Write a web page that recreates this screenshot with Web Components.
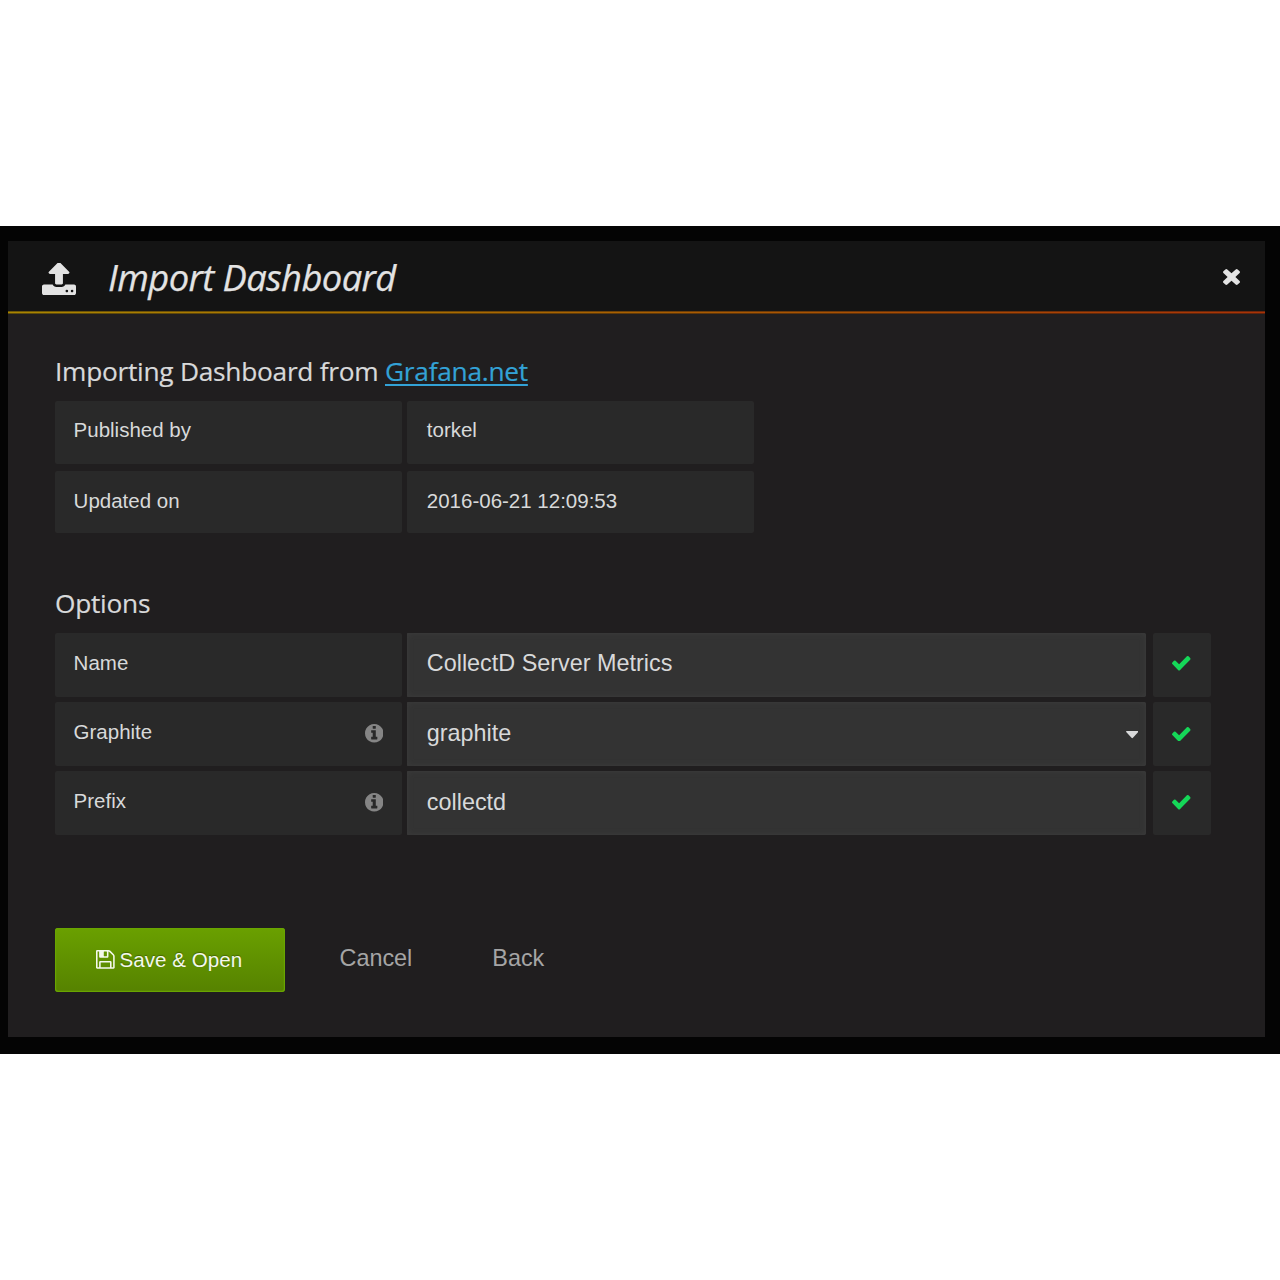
<!DOCTYPE html>
<html lang="en">
<head>
<meta charset="utf-8">
<title>Import Dashboard</title>
<style>
  html, body { margin: 0; background: #fff; }
  body { width: 1280px; height: 1280px; overflow: hidden; display: flex; flex-direction: column; justify-content: center; font-family: "Liberation Sans", Arial, sans-serif; color: #d8d9da; }
  a { color: #33a2d6; text-decoration: underline; text-decoration-thickness: 1.5px; text-underline-offset: 2.5px; }
</style>
</head>
<body>
<import-modal>
  <modal-header slot="header">Import Dashboard</modal-header>
  <form-section style="--title-height:55px">
    <span slot="title">Importing Dashboard from <a href="#">Grafana.net</a></span>
    <form-row style="--row:63px;--row-gap:6.5px;--label-line:57px;--value-line:57px">
      <form-label>Published by</form-label><form-label value>torkel</form-label>
    </form-row>
    <form-row style="--row:62px;--label-line:59px">
      <form-label>Updated on</form-label><form-label value>2016-06-21 12:09:53</form-label>
    </form-row>
  </form-section>
  <form-section style="--title-height:55px;--section-top:45.5px">
    <span slot="title">Options</span>
    <form-row style="--row-gap:5px">
      <form-label>Name</form-label><form-input style="--value-line:60px">CollectD Server Metrics</form-input><form-status></form-status>
    </form-row>
    <form-row style="--row-gap:5px">
      <form-label info>Graphite</form-label><form-input select>graphite</form-input><form-status style="--check-lift:0px"></form-status>
    </form-row>
    <form-row>
      <form-label info>Prefix</form-label><form-input>collectd</form-input><form-status style="--check-lift:1px"></form-status>
    </form-row>
  </form-section>
  <button-row slot="footer">
    <action-button primary>Save &amp; Open</action-button>
    <action-button style="--lead:54.5px">Cancel</action-button>
    <action-button style="--lead:80px">Back</action-button>
  </button-row>
</import-modal>
<script>
const ICONS = {
  upload: ['64 109 1664 1555', 'M1344 1472q0-26-19-45t-45-19-45 19-19 45 19 45 45 19 45-19 19-45zm256 0q0-26-19-45t-45-19-45 19-19 45 19 45 45 19 45-19 19-45zm128-224v320q0 40-28 68t-68 28h-1472q-40 0-68-28t-28-68v-320q0-40 28-68t68-28h427q21 56 70.5 92t110.5 36h256q61 0 110.5-36t70.5-92h427q40 0 68 28t28 68zm-325-648q-17 40-59 40h-256v448q0 26-19 45t-45 19h-256q-26 0-45-19t-19-45v-448h-256q-42 0-59-40-17-39 14-69l448-448q18-19 45-19t45 19l448 448q31 30 14 69z'],
  times: ['302 366 1188 1188', 'M1490 1322q0 40-28 68l-136 136q-28 28-68 28t-68-28l-294-294-294 294q-28 28-68 28t-68-28l-136-136q-28-28-28-68t28-68l294-294-294-294q-28-28-28-68t28-68l136-136q28-28 68-28t68 28l294 294 294-294q28-28 68-28t68 28l136 136q28 28 28 68t-28 68l-294 294 294 294q28 28 28 68z'],
  check: ['121 334 1550 1188', 'M1671 566q0 40-28 68l-724 724-136 136q-28 28-68 28t-68-28l-136-136-362-362q-28-28-28-68t28-68l136-136q28-28 68-28t68 28l294 295 656-657q28-28 68-28t68 28l136 136q28 28 28 68z'],
  info: ['128 128 1536 1536', 'M1152 1376v-160q0-14-9-23t-23-9h-96v-512q0-14-9-23t-23-9h-320q-14 0-23 9t-9 23v160q0 14 9 23t23 9h96v320h-96q-14 0-23 9t-9 23v160q0 14 9 23t23 9h448q14 0 23-9t9-23zm-128-896v-160q0-14-9-23t-23-9h-192q-14 0-23 9t-9 23v160q0 14 9 23t23 9h192q14 0 23-9t9-23zm640 416q0 209-103 385.5t-279.5 279.5-385.5 103-385.5-103-279.5-279.5-103-385.5 103-385.5 279.5-279.5 385.5-103 385.5 103 279.5 279.5 103 385.5z'],
  floppy: ['128 128 1536 1536', 'M512 1536h768v-384h-768v384zm896 0h128v-896q0-14-10-38.5t-20-34.5l-281-281q-10-10-34-20t-39-10v416q0 40-28 68t-68 28h-576q-40 0-68-28t-28-68v-416h-128v1280h128v-416q0-40 28-68t68-28h832q40 0 68 28t28 68v416zm-384-928v-320q0-13-9.5-22.5t-22.5-9.5h-192q-13 0-22.5 9.5t-9.5 22.5v320q0 13 9.5 22.5t22.5 9.5h192q13 0 22.5-9.5t9.5-22.5zm640 32v928q0 40-28 68t-68 28h-1344q-40 0-68-28t-28-68v-1344q0-40 28-68t68-28h928q40 0 88 20t76 48l280 280q28 28 48 76t20 88z'],
  caret: ['0 0 12 7', 'M0.6 0H11.4Q12.4 0.3 11.6 1.1L6.7 6.4Q6 7 5.3 6.4L0.4 1.1Q-0.4 0.3 0.6 0Z']
};
const icon = (n, w, h) => `<svg class="${n}" width="${w}" height="${h}" viewBox="${ICONS[n][0]}" preserveAspectRatio="none" fill="currentColor" aria-hidden="true"><path d="${ICONS[n][1]}"/></svg>`;

function define(name, render) {
  customElements.define(name, class extends HTMLElement {
    constructor() { super(); this.attachShadow({ mode: 'open' }); }
    connectedCallback() { this.shadowRoot.innerHTML = render(this); }
  });
}

define('import-modal', () => `<style>
  :host { display: block; box-sizing: border-box; height: 828px; background: #040404; padding: 15px 15px 17px 8px; }
  .modal { height: 100%; background: #201e1f; display: flex; flex-direction: column; }
  .body { padding: 32px 47px 0; flex: 1; }
  .foot { padding: 0 47px 45px; }
</style><div class="modal"><slot name="header"></slot><div class="body"><slot></slot></div><div class="foot"><slot name="footer"></slot></div></div>`);

define('modal-header', () => `<style>
  :host { display: block; background: #141414; color: #e3e3e3; }
  .bar { display: flex; height: 70px; align-items: flex-start; padding: 0 25px 0 34px; }
  .upload { margin-top: 21.5px; }
  h2 { margin: 0 auto 0 32px; font: italic 400 36.3px/73px "Open Sans", sans-serif; letter-spacing: -.59px; white-space: nowrap; -webkit-text-stroke: .25px; }
  .times { margin-top: 28px; }
  .line { height: 3px; background: linear-gradient(90deg, #a98500, #a95f00 50%, #a93206); -webkit-mask: linear-gradient(rgba(0,0,0,.6) 1px, #000 1px 2px, rgba(0,0,0,.5) 2px); mask: linear-gradient(rgba(0,0,0,.6) 1px, #000 1px 2px, rgba(0,0,0,.5) 2px); }
</style><div class="bar">${icon('upload', 34, 32)}<h2><slot></slot></h2>${icon('times', 17, 16)}</div><div class="line"></div>`);

define('form-section', () => `<style>
  :host { display: block; padding-top: var(--section-top, 0); }
  h3 { margin: 0; height: var(--title-height); font: 400 26.3px/51px "Open Sans", sans-serif; letter-spacing: -.27px; white-space: nowrap; -webkit-text-stroke: .2px; }
</style><h3><slot name="title"></slot></h3><slot></slot>`);

define('form-row', () => `<style>
  :host { display: flex; height: var(--row, 64px); margin-bottom: var(--row-gap, 0); gap: 5px; }
</style><slot></slot>`);

define('form-label', el => `<style>
  :host { display: flex; box-sizing: border-box; width: 347px; padding: 0 19px 0 18.6px; background: #292929; border-radius: 2px; font-size: 20.5px; line-height: var(--label-line, 60px); justify-content: space-between; white-space: nowrap; }
  :host([value]) { padding-left: 19.8px; }
  .info { color: #858585; margin-top: 22px; }
</style><span><slot></slot></span>${el.hasAttribute('info') ? icon('info', 18.5, 18.5) : ''}`);

define('form-input', el => `<style>
  :host { display: flex; box-sizing: border-box; width: 739px; padding: 0 8px 0 19.8px; background: #333; box-shadow: inset 0 0 5px 1px #3a3a3a; border-radius: 1px 2px 2px 1px; font-size: 23.4px; line-height: var(--value-line, 63px); justify-content: space-between; }
  .caret { margin-top: 29px; }
</style><span><slot></slot></span>${el.hasAttribute('select') ? icon('caret', 12.5, 7.5) : ''}`);

define('form-status', () => `<style>
  :host { display: flex; width: 58px; margin-left: 2px; background: #292929; border-radius: 2px; color: #15d758; justify-content: center; align-items: center; padding: 0 1px var(--check-lift, 3px) 0; box-sizing: border-box; }
</style>${icon('check', 18.5, 14.5)}`);

define('button-row', () => `<style>:host { display: flex; height: 64px; }</style><slot></slot>`);

define('action-button', el => `<style>
  :host { display: block; padding-left: var(--lead, 0); }
  button { all: unset; display: flex; box-sizing: border-box; height: 64px; font-size: 23.4px; line-height: 61px; color: #a5a5a5; white-space: nowrap; }
  .primary { width: 230px; justify-content: center; align-items: flex-start; gap: 5px; padding-right: 2px; font-size: 20.6px; line-height: 63px; color: #f4f8ec; background: linear-gradient(#6aa000, #568200); box-shadow: inset 0 0 0 1.2px #69a500; border-radius: 3px; text-shadow: 0 -1px 1px rgba(0,0,0,.3); }
  .floppy { margin-top: 22px; }
</style><button class="${el.hasAttribute('primary') ? 'primary' : 'plain'}">${el.hasAttribute('primary') ? icon('floppy', 18.7, 18.7) : ''}<span><slot></slot></span></button>`);
</script>
</body>
</html>
